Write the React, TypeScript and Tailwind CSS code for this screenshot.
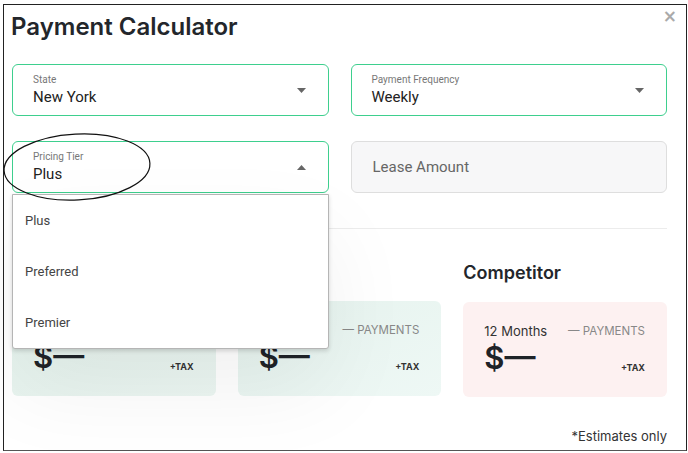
import React from "react";

const tiers = ["Plus", "Preferred", "Premier"];

function Caret({ up = false }: { up?: boolean }) {
  return (
    <svg width="9" height="5" viewBox="0 0 9 5" className="shrink-0">
      <path d={up ? "M0 5 L4.5 0 L9 5 Z" : "M0 0 L4.5 5 L9 0 Z"} fill="#666" />
    </svg>
  );
}

function SelectField({ label, value, open = false }: { label: string; value: string; open?: boolean }) {
  return (
    <div className="flex h-[52px] items-center justify-between rounded-md border border-[#3ecf8e] bg-white pl-[20px] pr-[22px]">
      <div className="flex flex-col">
        <span className="text-[10px] leading-[12px] text-[#777] font-['Roboto',sans-serif]">{label}</span>
        <span className="mt-[1px] text-[15px] leading-[20px] text-[#222] font-['Roboto',sans-serif]">{value}</span>
      </div>
      <Caret up={open} />
    </div>
  );
}

// covered: the part of the card that sits under the open menu is left empty
function ResultCard({ tone, showMonths = true, showPayments = true }: { tone: "green" | "green2" | "red"; showMonths?: boolean; showPayments?: boolean }) {
  const bg =
    tone === "red"
      ? "bg-[#fdf1f1]"
      : tone === "green"
      ? "bg-gradient-to-br from-[#e3f1eb] to-[#ecf6f2]"
      : "bg-gradient-to-br from-[#e6f3ee] to-[#eef8f5]";
  return (
    <div className={`flex h-[95px] flex-col rounded-md ${bg} pl-[21px] pr-[22px] pt-[20px]`}>
      <div className="flex h-[18px] items-center justify-between">
        <span className="text-[13px] leading-[18px] text-[#333]">{showMonths ? "12 Months" : ""}</span>
        <span className="text-[11.5px] leading-[18px] text-[#888]">{showPayments ? "— PAYMENTS" : ""}</span>
      </div>
      <div className="flex items-end justify-between">
        <span className="text-[31px] font-semibold leading-[36px] text-[#1f2328]">$—</span>
        <span className="mb-[2px] text-[9px] font-bold leading-[12px] text-[#333]">+TAX</span>
      </div>
    </div>
  );
}

export default function App() {
  return (
    <div className="h-[453px] w-[688px] overflow-hidden bg-white font-['Inter',sans-serif]">
      <div className="relative ml-[3px] mt-[4px] h-[447px] w-[684px] border border-[#222] border-b-[#555] pl-[8px] pr-[19px]">
        {/* close */}
        <span className="absolute right-[9px] top-[2px] text-[17px] font-bold leading-[18px] text-[#aaa] font-['DejaVu_Sans',sans-serif]">×</span>

        <h1 className="ml-[-1px] pt-[6px] text-[24px] font-semibold leading-[32px] text-[#23262b]">Payment Calculator</h1>

        <div className="mt-[21px] grid grid-cols-2 gap-x-[22px] gap-y-[25px]">
          <SelectField label="State" value="New York" />
          <SelectField label="Payment Frequency" value="Weekly" />
          <div className="relative">
            <SelectField label="Pricing Tier" value="Plus" open />
            {/* dropdown menu */}
            <div className="absolute left-0 right-0 top-[53px] z-20 rounded-b-[3px] border border-[#b5b5b5] bg-white shadow-[0_2px_4px_rgba(0,0,0,0.15),0_40px_90px_rgba(0,0,0,0.06)]">
              {tiers.map((t) => (
                <div key={t} className="flex h-[51px] items-center pl-[12px] text-[13px] text-[#444] font-['Roboto',sans-serif]">
                  {t}
                </div>
              ))}
            </div>
          </div>
          <div className="flex h-[52px] items-center rounded-md border border-[#dedede] bg-[#f7f7f8] pl-[21px]">
            <span className="text-[15px] text-[#666] font-['Roboto',sans-serif]">Lease Amount</span>
          </div>
        </div>

        <div className="mt-[35px] h-px bg-[#ececec]" />

        <div className="mt-[32px] grid grid-cols-3 gap-x-[22px]">
          <div className="flex flex-col">
            <div className="h-[24px]" />
            <div className="mt-[16px]">
              <ResultCard tone="green" showMonths={false} showPayments={false} />
            </div>
          </div>
          <div className="flex flex-col">
            <div className="h-[24px]" />
            <div className="mt-[16px]">
              <ResultCard tone="green2" showMonths={false} />
            </div>
          </div>
          <div className="flex flex-col">
            <h2 className="text-[18px] font-semibold leading-[24px] text-[#23262b]">Competitor</h2>
            <div className="mt-[17px]">
              <ResultCard tone="red" />
            </div>
          </div>
        </div>

        <p className="mt-[30px] text-right text-[13px] leading-[18px] text-[#333]">*Estimates only</p>

        {/* hand-drawn annotation ring */}
        <svg className="pointer-events-none absolute left-[-3px] top-[122px] z-30" width="160" height="80" viewBox="0 0 160 80">
          <ellipse cx="76" cy="40" rx="73" ry="33" fill="none" stroke="#111" strokeWidth="1.2" transform="rotate(-3 76 40)" />
        </svg>
      </div>
    </div>
  );
}
